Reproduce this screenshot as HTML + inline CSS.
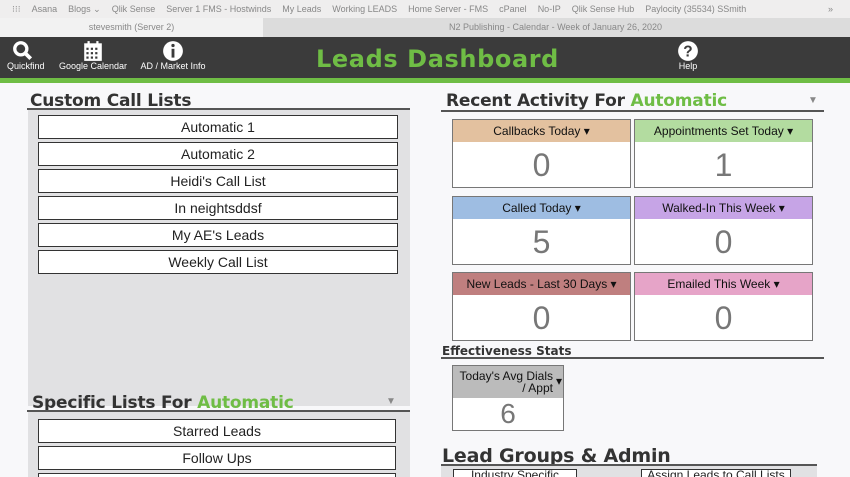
<!DOCTYPE html><html><head><style>
*{margin:0;padding:0;box-sizing:border-box}
html,body{width:850px;height:477px;overflow:hidden}
body{background:#f8f8fa;font-family:"Liberation Sans",Arial,sans-serif;position:relative}
.a{position:absolute}
.bm{top:0;left:0;width:850px;height:18px;background:#efeeee;font-size:9px;color:#888;white-space:nowrap;line-height:18px}
.bm span{margin-right:11px}
.tabs{top:18px;left:0;width:850px;height:19px;background:#dcdcdc;font-size:9px;color:#888;line-height:19px}
.hdr{top:37px;left:0;width:850px;height:41px;background:#3b3b3b}
.grn{top:78px;left:0;width:850px;height:5px;background:#6fbd45}
.ic{color:#fff;font-size:9px;text-align:center}
h2{position:absolute;font-family:"DejaVu Sans",sans-serif;font-size:17px;font-weight:bold;color:#333;white-space:nowrap;letter-spacing:-.2px}
h2 b{color:#6fbd45}
.ul{position:absolute;height:2px;background:#555}
.btn{position:absolute;left:38px;width:360px;height:24px;border:1px solid #333;background:#fff;font-size:14px;text-align:center;line-height:22px;color:#222}
.t{position:absolute;width:179px;height:69px;border:1px solid #777;background:#fff}
.t .h{height:22px;font-size:12px;text-align:center;line-height:22px;color:#111}
.t .n{font-size:32px;color:#777;text-align:center;line-height:46px}
</style></head><body>
<div class="a bm"><span style="margin-left:12px">⁝⁝⁝</span><span>Asana</span><span>Blogs ⌄</span><span>Qlik Sense</span><span>Server 1 FMS - Hostwinds</span><span>My Leads</span><span>Working LEADS</span><span>Home Server - FMS</span><span>cPanel</span><span>No-IP</span><span>Qlik Sense Hub</span><span>Paylocity (35534) SSmith</span><span style="position:absolute;right:6px">»</span></div>
<div class="a tabs"><div class="a" style="left:0;width:263px;height:19px;background:#f2f2f2;text-align:center">stevesmith (Server 2)</div><div class="a" style="left:263px;width:585px;text-align:center">N2 Publishing - Calendar - Week of January 26, 2020</div></div>
<div class="a hdr">
<div class="a ic" style="left:7px;top:3px;width:32px"><svg width="22" height="22" viewBox="0 0 20 20"><circle cx="8" cy="8" r="5.5" stroke="#fff" stroke-width="3" fill="none"/><path d="M12 12l5 5" stroke="#fff" stroke-width="3.5"/></svg><div style="margin-top:-3px">Quickfind</div></div>
<div class="a ic" style="left:56px;top:3px;width:74px"><svg width="22" height="22" viewBox="0 0 20 20"><rect x="2" y="3" width="16" height="16" fill="#fff"/><rect x="5" y="1" width="2" height="4" fill="#fff"/><rect x="13" y="1" width="2" height="4" fill="#fff"/><g fill="#3b3b3b"><rect x="4" y="7" width="2" height="2"/><rect x="8" y="7" width="2" height="2"/><rect x="12" y="7" width="2" height="2"/><rect x="4" y="11" width="2" height="2"/><rect x="8" y="11" width="2" height="2"/><rect x="12" y="11" width="2" height="2"/><rect x="4" y="15" width="2" height="2"/><rect x="8" y="15" width="2" height="2"/><rect x="12" y="15" width="2" height="2"/></g></svg><div style="margin-top:-3px">Google Calendar</div></div>
<div class="a ic" style="left:136px;top:3px;width:74px"><svg width="22" height="22" viewBox="0 0 20 20"><circle cx="10" cy="10" r="9" fill="#fff"/><rect x="8.7" y="8" width="2.6" height="8" fill="#3b3b3b"/><circle cx="10" cy="5" r="1.5" fill="#3b3b3b"/></svg><div style="margin-top:-3px">AD / Market Info</div></div>
<div class="a" style="left:316px;top:8px;font-family:'DejaVu Sans',sans-serif;font-size:24px;font-weight:bold;color:#6fbd45;letter-spacing:.6px">Leads Dashboard</div>
<div class="a ic" style="left:673px;top:3px;width:30px"><svg width="22" height="22" viewBox="0 0 20 20"><circle cx="10" cy="10" r="9" fill="#fff"/><text x="10" y="15" font-size="14" font-weight="bold" text-anchor="middle" fill="#3b3b3b" font-family="Liberation Sans">?</text></svg><div style="margin-top:-3px">Help</div></div>
</div>
<div class="a grn"></div>
<div class="a" style="left:28px;top:110px;width:382px;height:296px;background:#e1e1e3"></div>
<h2 style="left:30px;top:91px">Custom Call Lists</h2><div class="ul" style="left:27px;top:108px;width:383px"></div>
<div class="btn" style="top:115px">Automatic 1</div>
<div class="btn" style="top:142px">Automatic 2</div>
<div class="btn" style="top:169px">Heidi's Call List</div>
<div class="btn" style="top:196px">In neightsddsf</div>
<div class="btn" style="top:223px">My AE's Leads</div>
<div class="btn" style="top:250px">Weekly Call List</div>
<h2 style="left:32px;top:393px">Specific Lists For <b>Automatic</b></h2><div class="a" style="left:386px;top:396px;font-size:10px;color:#888">▼</div><div class="ul" style="left:27px;top:410px;width:383px"></div>
<div class="a" style="left:28px;top:412px;width:382px;height:65px;background:#e1e1e3"></div>
<div class="btn" style="top:419px;width:358px">Starred Leads</div>
<div class="btn" style="top:446px;width:358px">Follow Ups</div>
<div class="btn" style="top:473px;width:358px"></div>
<h2 style="left:446px;top:91px">Recent Activity For <b>Automatic</b></h2><div class="a" style="left:808px;top:95px;font-size:10px;color:#888">▼</div><div class="ul" style="left:441px;top:110px;width:383px"></div>
<div class="t" style="left:452px;top:119px"><div class="h" style="background:#e3c19f">Callbacks Today ▾</div><div class="n">0</div></div>
<div class="t" style="left:634px;top:119px"><div class="h" style="background:#b3dca0">Appointments Set Today ▾</div><div class="n">1</div></div>
<div class="t" style="left:452px;top:196px"><div class="h" style="background:#9ebde2">Called Today ▾</div><div class="n">5</div></div>
<div class="t" style="left:634px;top:196px"><div class="h" style="background:#c6a4e6">Walked-In This Week ▾</div><div class="n">0</div></div>
<div class="t" style="left:452px;top:272px"><div class="h" style="background:#bf7f7f">New Leads - Last 30 Days ▾</div><div class="n">0</div></div>
<div class="t" style="left:634px;top:272px"><div class="h" style="background:#e6a4c8">Emailed This Week ▾</div><div class="n">0</div></div>
<div class="a" style="left:442px;top:344px;font-family:'DejaVu Sans',sans-serif;font-size:12px;font-weight:bold;color:#333">Effectiveness Stats</div><div class="ul" style="left:441px;top:357px;width:383px"></div>
<div class="t" style="left:452px;top:365px;width:112px;height:66px"><div class="h" style="background:#bbb;height:32px;font-size:12px;line-height:12px;padding:4px 10px 0 0;text-align:right;position:relative">Today's Avg Dials<br>/ Appt<span style="position:absolute;right:1px;top:9px">▾</span></div><div class="n" style="line-height:32px;font-size:28px">6</div></div>
<h2 style="left:442px;top:445px;font-size:19px">Lead Groups &amp; Admin</h2><div class="ul" style="left:441px;top:464px;width:376px"></div>
<div class="a" style="left:441px;top:466px;width:376px;height:11px;background:#e1e1e3"></div>
<div class="btn" style="left:453px;top:469px;width:124px;height:14px;font-size:12px;line-height:10px">Industry Specific</div>
<div class="btn" style="left:641px;top:469px;width:150px;height:14px;font-size:12px;line-height:10px">Assign Leads to Call Lists</div>
</body></html>
